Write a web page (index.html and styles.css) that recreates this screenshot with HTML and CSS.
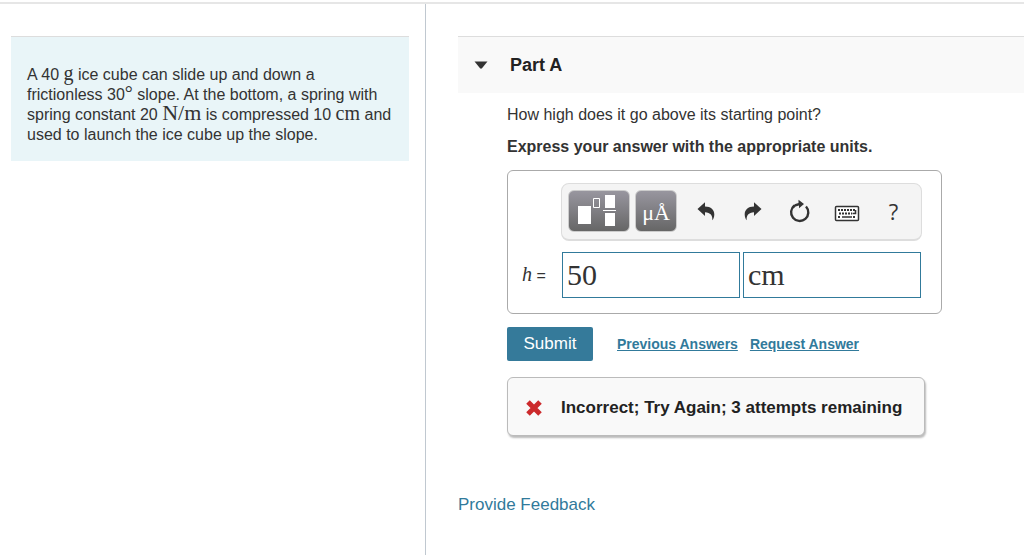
FILE: index.html
```html
<!DOCTYPE html>
<html lang="en">
<head>
    <meta charset="UTF-8">
    <meta name="viewport" content="width=device-width, initial-scale=1.0">
    <title>Part A</title>
    <link rel="stylesheet" href="styles.css">
</head>
<body>
    <div class="page">
        <aside class="problem">
            <p class="intro">A 40 <span class="unit">g</span> ice cube can slide up and down a frictionless 30<span class="unit">°</span> slope. At the bottom, a spring with spring constant 20 <span class="unit big">N/m</span> is compressed 10 <span class="unit">cm</span> and used to launch the ice cube up the slope.</p>
        </aside>
        <main class="parts">
            <h2 class="part-header">
                <svg class="caret" width="14" height="8" viewBox="0 0 14 8"><path d="M0.500 0.500h13L8 7.300q-1 .8-2 0z"/></svg>
                Part A
            </h2>
            <form class="part-body">
                <p class="question">How high does it go above its starting point?</p>
                <p class="instructions">Express your answer with the appropriate units.</p>
                <div class="answer-box">
                    <div class="toolbar">
                        <button type="button" class="palette templates" aria-label="Templates">
                            <svg width="60" height="40" viewBox="0 0 60 40" fill="#fff">
                                <path d="M9 15h13v18H9zM36 4h10v13H36zM34 19h13v1H34zM36 22h10v13H36z"/>
                                <path d="M24.5 7.5h6v9h-6z" fill="none" stroke="#fff"/>
                            </svg>
                        </button>
                        <button type="button" class="palette symbols">μÅ</button>
                        <button type="button" class="tool" aria-label="Undo">
                            <svg width="20" height="20" viewBox="0 0 20 20"><path d="M1.500 8L9 1.200v4.300c6 0 9.300 3.500 9.300 8 0 2.500-.8 4.500-2 5.700.5-4.700-1.800-7.700-7.300-8V15z"/></svg>
                        </button>
                        <button type="button" class="tool" aria-label="Redo">
                            <svg width="20" height="20" viewBox="0 0 20 20"><path d="M18.500 8L11 1.200v4.300c-6 0-9.300 3.500-9.300 8 0 2.500.8 4.500 2 5.700-.5-4.700 1.800-7.700 7.300-8V15z"/></svg>
                        </button>
                        <button type="button" class="tool" aria-label="Reset">
                            <svg width="22" height="24" viewBox="0 0 22 24"><path d="M5.500 6.500a8.600 8.600 0 1 0 11.500 1" fill="none" stroke="#333" stroke-width="2.400"/><path d="M9.500.800l5.500 4.200-5 4.200V6.500Q6 7 4.300 9.500L3.500 7Q6 4.200 9.500 3.900z"/></svg>
                        </button>
                        <button type="button" class="tool" aria-label="Keyboard">
                            <svg width="26" height="24" viewBox="0 0 26 24">
                                <rect x="1.500" y="7.500" width="23" height="14" rx="1" fill="#fff" stroke="#333" stroke-width="1.500"/>
                                <path d="M4 11h18" fill="none" stroke="#333" stroke-width="2" stroke-dasharray="2 1"/>
                                <path d="M5 14.500h13M4 18h3M19 18h3" fill="none" stroke="#333" stroke-width="2" stroke-dasharray="2 1"/>
                                <path d="M8 18h10M18.500 14.500h3V11" fill="none" stroke="#333" stroke-width="1.600"/>
                            </svg>
                        </button>
                        <button type="button" class="tool help" aria-label="Help">?</button>
                    </div>
                    <label class="variable" for="value"><i>h</i> =</label>
                    <div class="fields">
                        <input type="text" id="value" value="50">
                        <input type="text" id="units" value="cm" aria-label="Units">
                    </div>
                </div>
                <div class="actions">
                    <button type="submit" class="submit">Submit</button>
                    <a href="#">Previous Answers</a>
                    <a href="#">Request Answer</a>
                </div>
                <div class="feedback">
                    <svg class="cross" width="18" height="18" viewBox="0 0 18 18"><path d="M3 3l12 12M15 3L3 15" fill="none" stroke="#cc2a2c" stroke-width="5"/></svg>
                    Incorrect; Try Again; 3 attempts remaining
                </div>
            </form>
            <a class="provide-feedback" href="#">Provide Feedback</a>
        </main>
    </div>
</body>
</html>
```
FILE: styles.css
```css
* {
    box-sizing: border-box;
}
body {
    margin: 0;
    padding-top: 2px;
    font-family: "Liberation Sans", Arial, sans-serif;
    font-size: 16px;
    line-height: 20px;
    color: #333;
    background: #fff;
}
p, h2 {
    margin: 0;
}
button {
    padding: 0;
    border: none;
    font-family: inherit;
    cursor: pointer;
}
svg {
    display: block;
    flex: none;
}
a {
    color: #317a9b;
}
.page {
    display: grid;
    grid-template-columns: 426px 1fr;
    min-height: calc(100vh - 2px);
    border-top: 2px solid #e6e6e6;
}
.problem {
    padding: 32px 16px 32px 11px;
    border-right: 1px solid #c0c8d0;
}
.intro {
    padding: 28px 16px 16px;
    border-top: 1px solid #ddd;
    background: #e9f5f8;
}
.unit {
    font-family: "Liberation Serif", serif;
    font-size: 20px;
    line-height: 16px;
}
.unit.big {
    font-size: 22px;
}
.parts {
    padding: 32px 0 32px 32px;
}
.part-header {
    display: flex;
    align-items: center;
    gap: 22px;
    height: 57px;
    padding-left: 16px;
    border-top: 1px solid #ddd;
    background: #f9f9f9;
    font-size: 18px;
    color: #222;
}
.caret, .tool {
    fill: #333;
}
.part-body {
    padding: 12px 16px 0 49px;
}
.question {
    margin-bottom: 12px;
}
.instructions {
    margin-bottom: 13px;
    font-weight: bold;
}
.answer-box {
    display: grid;
    grid-template-columns: 40px 1fr;
    row-gap: 11px;
    max-width: 435px;
    padding: 12px 19px 15px 13px;
    border: 1px solid #aaa;
    border-radius: 6px;
}
.toolbar {
    grid-column: 2;
    display: flex;
    align-items: center;
    height: 58px;
    padding: 0 0 2px 6px;
    border: 1px solid #ddd;
    border-bottom-width: 2px;
    border-radius: 8px;
    background: #f4f4f4;
}
.palette {
    height: 42px;
    margin-right: 5px;
    border: 1px solid #ccc;
    border-radius: 6px;
    background: linear-gradient(#98969f, #666);
    color: #fff;
}
.templates {
    width: 62px;
}
.symbols {
    width: 42px;
    padding-top: 4px;
    font-family: "Liberation Serif", serif;
    font-size: 22px;
}
.tool {
    display: flex;
    align-items: center;
    justify-content: center;
    width: 47px;
    height: 40px;
    background: none;
    color: #333;
}
.help {
    font-family: "Open Sans", sans-serif;
    font-size: 22px;
}
.variable {
    align-self: center;
    padding-left: 1px;
    font-size: 16px;
}
.variable i {
    font-family: "Liberation Serif", serif;
    font-size: 20px;
}
.fields {
    display: grid;
    grid-template-columns: 1fr 1fr;
    gap: 3px;
    padding: 0 1px;
}
.fields input {
    width: 100%;
    height: 46px;
    padding: 0 4px;
    border: 1px solid #317a9b;
    font-family: "Liberation Serif", serif;
    font-size: 30px;
    color: #333;
}
.actions {
    display: flex;
    align-items: center;
    gap: 12px;
    margin: 13px 0 16px;
    font-weight: bold;
    font-size: 14px;
}
.submit {
    width: 86px;
    height: 34px;
    margin-right: 12px;
    border-radius: 2px;
    background: #357a9a;
    color: #fff;
    font-size: 17px;
}
.feedback {
    display: flex;
    align-items: center;
    gap: 18px;
    width: 100%;
    max-width: 418px;
    min-height: 59px;
    padding: 2px 17px 0;
    border: 1px solid #bbb;
    border-radius: 6px;
    box-shadow: 1px 2px 2px #bbb;
    background: #f9f9f9;
    font-size: 17px;
    font-weight: bold;
    color: #222;
}
.provide-feedback {
    display: inline-block;
    margin-top: 59px;
    font-size: 17px;
    text-decoration: none;
}
```
